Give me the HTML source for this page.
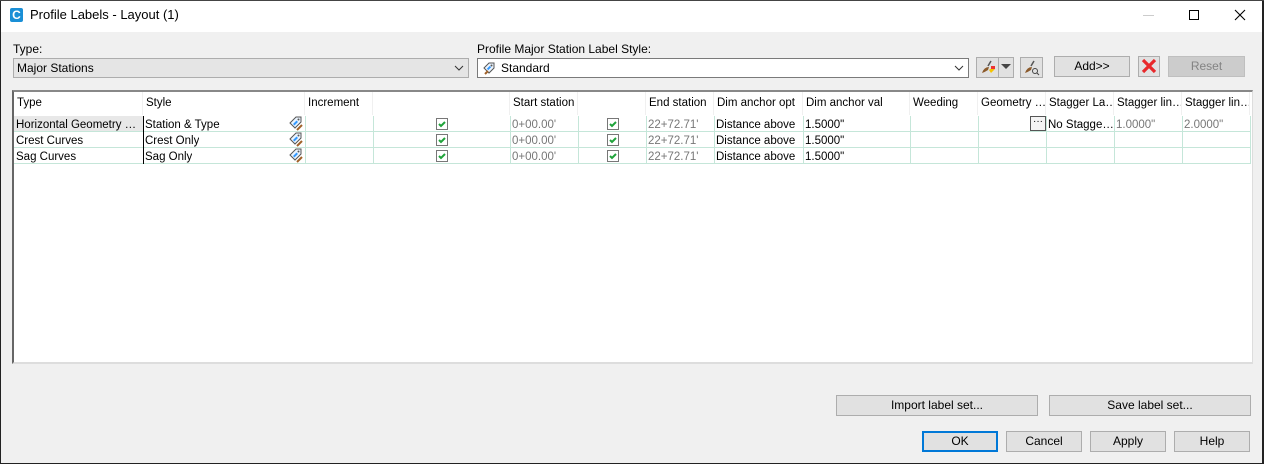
<!DOCTYPE html>
<html><head><meta charset="utf-8">
<style>
*{margin:0;padding:0;box-sizing:border-box}
body{width:1264px;height:464px;background:#f0f0f0;font-family:"Liberation Sans",Arial,sans-serif;font-size:12px;color:#000;position:relative;overflow:hidden}
.a{position:absolute}
.btn{position:absolute;background:#e1e1e1;border:1px solid #adadad;text-align:center;line-height:18px;font-size:12px}
.c{position:absolute;height:16px;line-height:18px;white-space:nowrap;overflow:hidden;text-overflow:ellipsis;padding-left:2px;font-size:11.5px}
.h{position:absolute;top:92px;height:23px;line-height:22px;padding-left:3px;font-size:11.5px;border-right:1px solid #f0f0f0;white-space:nowrap;overflow:hidden}
.vl{position:absolute;top:116px;height:48px;width:1px;background:#c5e6d9}
.hl{position:absolute;left:14px;width:1237px;height:1px;background:#c5e6d9}
.g{color:#777}
.cb{position:absolute;width:12px;height:12px;border:1px solid #777;background:#fff}
</style></head><body>
<div class="a" style="left:0;top:0;width:1264px;height:32px;background:#fff"></div>
<div class="a" style="left:0;top:0;width:1px;height:464px;background:#222"></div>
<div class="a" style="left:1262px;top:0;width:2px;height:464px;background:#222"></div>
<div class="a" style="left:0;top:463px;width:1264px;height:1px;background:#222"></div>
<div class="a" style="left:0;top:0;width:1264px;height:1px;background:#444"></div>
<div class="a" style="left:10px;top:8px;width:13px;height:14px;background:#1a8fd6;border-radius:2px;color:#fff;font-weight:bold;font-size:12px;line-height:14px;text-align:center">C</div>
<div class="a" style="left:30px;top:7px;font-size:13px">Profile Labels - Layout (1)</div>
<div class="a" style="left:1143px;top:15px;width:11px;height:1px;background:#ccc"></div>
<div class="a" style="left:1189px;top:10px;width:10px;height:10px;border:1px solid #000"></div>
<svg class="a" style="left:1234px;top:9px" width="12" height="12"><path d="M1 1L11 11M11 1L1 11" stroke="#000" stroke-width="1.1"/></svg>

<div class="a" style="left:13px;top:42px">Type:</div>
<div class="a" style="left:13px;top:58px;width:456px;height:20px;background:#e5e5e5;border:1px solid #adadad;padding-left:3px;line-height:18px">Major Stations</div>
<svg class="a" style="left:454px;top:64px" width="10" height="8"><path d="M1 2L5 6L9 2" stroke="#333" fill="none"/></svg>

<div class="a" style="left:477px;top:42px">Profile Major Station Label Style:</div>
<div class="a" style="left:477px;top:58px;width:492px;height:20px;background:#fff;border:1px solid #7a7a7a;padding-left:23px;line-height:18px">Standard</div>
<svg class="a" style="left:482px;top:61px" width="14" height="14"><path d="M2 7L7 2L12 2L12 7L7 12Z" fill="#eaf4ff" stroke="#555"/><circle cx="9.5" cy="4.5" r="1" fill="#555"/><rect x="5" y="6" width="4" height="2" fill="#39f" transform="rotate(-45 7 7)"/><path d="M3 13L6 10" stroke="#a0622a" stroke-width="2"/></svg>
<svg class="a" style="left:954px;top:64px" width="10" height="8"><path d="M1 2L5 6L9 2" stroke="#333" fill="none"/></svg>

<div class="a" style="left:976px;top:57px;width:38px;height:21px;background:#e1e1e1;border:1px solid #adadad"></div>
<div class="a" style="left:998px;top:57px;width:1px;height:21px;background:#adadad"></div>
<svg class="a" style="left:979px;top:59px" width="18" height="18"><path d="M12 2L9 7" stroke="#555" stroke-width="1.5"/><path d="M3 14Q5 8 10 8L9 11Q6 13 3 14Z" fill="#8b5a2b"/><path d="M10 11L14 8L16 10L12 14Z" fill="#f5c400"/><rect x="12" y="7" width="4" height="3" fill="#e33"/></svg>
<svg class="a" style="left:1001px;top:64px" width="10" height="6"><path d="M0 0L10 0L5 5Z" fill="#444"/></svg>
<div class="a" style="left:1020px;top:57px;width:23px;height:21px;background:#e1e1e1;border:1px solid #adadad"></div>
<svg class="a" style="left:1022px;top:59px" width="18" height="18"><path d="M12 2L9 7" stroke="#555" stroke-width="1.5"/><path d="M3 14Q5 8 10 8L9 11Q6 13 3 14Z" fill="#8b5a2b"/><circle cx="13" cy="12" r="2.5" fill="none" stroke="#444"/><path d="M14.5 13.5L17 16" stroke="#444"/></svg>

<div class="btn" style="left:1054px;top:56px;width:76px;height:21px">Add&gt;&gt;</div>
<div class="a" style="left:1138px;top:56px;width:22px;height:21px;background:#e1e1e1;border:1px solid #adadad"></div>
<svg class="a" style="left:1141px;top:58px" width="16" height="16"><path d="M2 2L14 14M14 2L2 14" stroke="#e8282b" stroke-width="3.2"/></svg>
<div class="btn" style="left:1168px;top:56px;width:77px;height:21px;background:#cccccc;border-color:#bfbfbf;color:#838383">Reset</div>

<div class="a" style="left:12px;top:90px;width:1241px;height:274px;background:#fff;border-left:2px solid #666;border-top:2px solid #888;border-right:1px solid #ddd;border-bottom:2px solid #ddd"></div>
<div class="h" style="left:14px;width:129px">Type</div>
<div class="h" style="left:143px;width:162px">Style</div>
<div class="h" style="left:305px;width:68px">Increment</div>
<div class="h" style="left:373px;width:137px"></div>
<div class="h" style="left:510px;width:68px">Start station</div>
<div class="h" style="left:578px;width:68px"></div>
<div class="h" style="left:646px;width:68px">End station</div>
<div class="h" style="left:714px;width:89px">Dim anchor opt</div>
<div class="h" style="left:803px;width:107px">Dim anchor val</div>
<div class="h" style="left:910px;width:68px">Weeding</div>
<div class="h" style="left:978px;width:68px">Geometry …</div>
<div class="h" style="left:1046px;width:68px">Stagger La…</div>
<div class="h" style="left:1114px;width:68px">Stagger lin…</div>
<div class="h" style="left:1182px;width:68px">Stagger lin…</div>

<div class="a" style="left:14px;top:116px;width:129px;height:15px;background:#e8e8e8"></div>
<div class="hl" style="top:131px"></div><div class="hl" style="top:147px"></div><div class="hl" style="top:163px"></div>
<div class="vl" style="left:305px"></div><div class="vl" style="left:373px"></div><div class="vl" style="left:510px"></div><div class="vl" style="left:578px"></div><div class="vl" style="left:646px"></div><div class="vl" style="left:714px"></div><div class="vl" style="left:803px"></div><div class="vl" style="left:910px"></div><div class="vl" style="left:978px"></div><div class="vl" style="left:1046px"></div><div class="vl" style="left:1114px"></div><div class="vl" style="left:1182px"></div><div class="vl" style="left:1250px"></div>
<div class="a" style="left:143px;top:116px;width:1px;height:48px;background:#000"></div>

<div class="c" style="left:14px;top:116px;width:129px">Horizontal Geometry Points</div>
<div class="c" style="left:14px;top:132px">Crest Curves</div>
<div class="c" style="left:14px;top:148px">Sag Curves</div>
<div class="c" style="left:143px;top:116px">Station &amp; Type</div>
<div class="c" style="left:143px;top:132px">Crest Only</div>
<div class="c" style="left:143px;top:148px">Sag Only</div>

<svg class="a" style="left:288px;top:115px" width="16" height="16"><path d="M2 8L8 2L13 2L13 7L7 13Z" fill="#eaf4ff" stroke="#555"/><circle cx="10.5" cy="4.5" r="1" fill="#555"/><rect x="5" y="7" width="5" height="2" fill="#39f" transform="rotate(-45 7.5 8)"/><path d="M9 15L14 10" stroke="#a0622a" stroke-width="2"/></svg>
<svg class="a" style="left:288px;top:131px" width="16" height="16"><path d="M2 8L8 2L13 2L13 7L7 13Z" fill="#eaf4ff" stroke="#555"/><circle cx="10.5" cy="4.5" r="1" fill="#555"/><rect x="5" y="7" width="5" height="2" fill="#39f" transform="rotate(-45 7.5 8)"/><path d="M9 15L14 10" stroke="#a0622a" stroke-width="2"/></svg>
<svg class="a" style="left:288px;top:147px" width="16" height="16"><path d="M2 8L8 2L13 2L13 7L7 13Z" fill="#eaf4ff" stroke="#555"/><circle cx="10.5" cy="4.5" r="1" fill="#555"/><rect x="5" y="7" width="5" height="2" fill="#39f" transform="rotate(-45 7.5 8)"/><path d="M9 15L14 10" stroke="#a0622a" stroke-width="2"/></svg>

<div class="cb" style="left:436px;top:118px"></div><div class="cb" style="left:436px;top:134px"></div><div class="cb" style="left:436px;top:150px"></div>
<div class="cb" style="left:607px;top:118px"></div><div class="cb" style="left:607px;top:134px"></div><div class="cb" style="left:607px;top:150px"></div>
<svg class="a" style="left:436px;top:118px" width="12" height="48"><g stroke="#1fa33a" stroke-width="2" fill="none"><path d="M3 6L5 8L9 4"/><path d="M3 22L5 24L9 20"/><path d="M3 38L5 40L9 36"/></g></svg>
<svg class="a" style="left:607px;top:118px" width="12" height="48"><g stroke="#1fa33a" stroke-width="2" fill="none"><path d="M3 6L5 8L9 4"/><path d="M3 22L5 24L9 20"/><path d="M3 38L5 40L9 36"/></g></svg>

<div class="c g" style="left:510px;top:116px">0+00.00'</div>
<div class="c g" style="left:510px;top:132px">0+00.00'</div>
<div class="c g" style="left:510px;top:148px">0+00.00'</div>
<div class="c g" style="left:646px;top:116px">22+72.71'</div>
<div class="c g" style="left:646px;top:132px">22+72.71'</div>
<div class="c g" style="left:646px;top:148px">22+72.71'</div>
<div class="c" style="left:714px;top:116px">Distance above</div>
<div class="c" style="left:714px;top:132px">Distance above</div>
<div class="c" style="left:714px;top:148px">Distance above</div>
<div class="c" style="left:803px;top:116px">1.5000"</div>
<div class="c" style="left:803px;top:132px">1.5000"</div>
<div class="c" style="left:803px;top:148px">1.5000"</div>
<div class="a" style="left:1030px;top:116px;width:16px;height:15px;border:1px solid #555;background:#f4f4f4;font-size:10px;line-height:10px;text-align:center">···</div>
<div class="c" style="left:1046px;top:116px;width:68px">No Stagger…</div>
<div class="c g" style="left:1114px;top:116px">1.0000"</div>
<div class="c g" style="left:1182px;top:116px">2.0000"</div>

<div class="btn" style="left:836px;top:395px;width:202px;height:21px">Import label set...</div>
<div class="btn" style="left:1049px;top:395px;width:202px;height:21px">Save label set...</div>
<div class="btn" style="left:922px;top:431px;width:76px;height:21px;border:2px solid #0078d7;line-height:17px">OK</div>
<div class="btn" style="left:1006px;top:431px;width:76px;height:21px">Cancel</div>
<div class="btn" style="left:1090px;top:431px;width:76px;height:21px">Apply</div>
<div class="btn" style="left:1174px;top:431px;width:76px;height:21px">Help</div>
</body></html>
